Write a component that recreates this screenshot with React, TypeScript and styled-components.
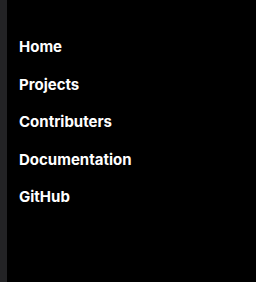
import React from 'react';
import styled, { createGlobalStyle } from 'styled-components';

const GlobalStyle = createGlobalStyle`
  html, body {
    margin: 0;
    padding: 0;
    background: #000;
  }
`;

const Page = styled.div`
  display: flex;
  width: 256px;
  height: 282px;
  background: #000;
  overflow: hidden;
`;

const Rail = styled.div`
  width: 7px;
  flex-shrink: 0;
  background: #232325;
`;

const Menu = styled.nav`
  display: flex;
  flex-direction: column;
  padding: 28px 0 0 12px;
  gap: 0;
`;

const MenuItem = styled.a`
  display: block;
  height: 37.5px;
  line-height: 37.5px;
  font-family: Inter, "Liberation Sans", sans-serif;
  font-weight: 700;
  font-size: 15px;
  color: #fff;
  text-decoration: none;
`;

const items = ['Home', 'Projects', 'Contributers', 'Documentation', 'GitHub'];

export default function App() {
  return (
    <>
      <GlobalStyle />
      <Page>
        <Rail />
        <Menu>
          {items.map((item) => (
            <MenuItem key={item} href="#">{item}</MenuItem>
          ))}
        </Menu>
      </Page>
    </>
  );
}
